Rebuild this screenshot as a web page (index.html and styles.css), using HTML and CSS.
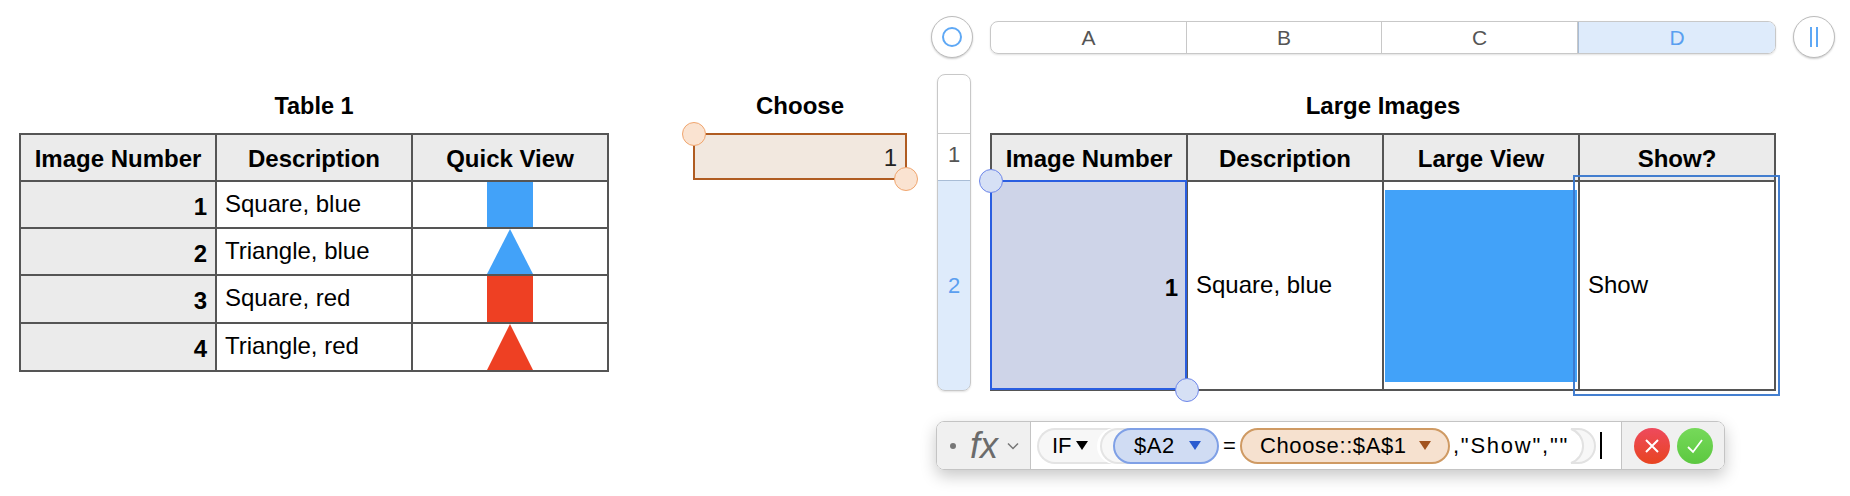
FILE: index.html
```html
<!DOCTYPE html>
<html lang="en">
<head>
    <meta charset="UTF-8">
    <title>Large Images</title>
    <link rel="stylesheet" href="styles.css">
</head>
<body>
<div class="sheet">
    <!-- Table 1 -->
    <div class="block first">
        <div class="title narrow">Table 1</div>
        <table class="grid small">
            <tr><th>Image Number</th><th>Description</th><th>Quick View</th></tr>
            <tr><td class="num">1</td><td>Square, blue</td><td class="pic"><div class="shape blue"></div></td></tr>
            <tr><td class="num">2</td><td>Triangle, blue</td><td class="pic"><div class="shape blue tri"></div></td></tr>
            <tr class="tall"><td class="num">3</td><td>Square, red</td><td class="pic"><div class="shape red"></div></td></tr>
            <tr><td class="num">4</td><td>Triangle, red</td><td class="pic"><div class="shape red tri"></div></td></tr>
        </table>
    </div>

    <!-- Choose -->
    <div class="block choose">
        <div class="title">Choose</div>
        <div class="choose-box">
            1
            <span class="handle orange top-left"></span>
            <span class="handle orange bottom-right"></span>
        </div>
    </div>

    <!-- Large Images + editing bars -->
    <div class="editor">
        <div class="ctrl-row">
            <div class="round-btn"><span class="ring"></span></div>
            <div class="col-heads">
                <span>A</span>
                <span>B</span>
                <span>C</span>
                <span class="on">D</span>
            </div>
            <div class="round-btn"><span class="bars"></span></div>
        </div>

        <div class="table-row">
            <div class="row-heads">
                <span class="blank"></span>
                <span class="one">1</span>
                <span class="two">2</span>
            </div>
            <div class="large">
                <div class="title">Large Images</div>
                <table class="grid big">
                    <tr><th>Image Number</th><th>Description</th><th>Large View</th><th>Show?</th></tr>
                    <tr>
                        <td class="num sel">
                            1
                            <span class="sel-frame"></span>
                            <span class="handle bluish top-left"></span>
                            <span class="handle bluish bottom-right"></span>
                        </td>
                        <td>Square, blue</td>
                        <td class="pic"><div class="shape blue huge"></div></td>
                        <td class="show">Show<span class="show-frame"></span></td>
                    </tr>
                </table>
            </div>
        </div>

        <div class="formula">
            <div class="fx-part">
                <span class="dot"></span>
                <span class="fx">fx</span>
                <svg class="chev" width="12" height="8" viewBox="0 0 12 8"><path d="M1 1.5l5 5 5-5" fill="none" stroke="#777" stroke-width="1.5"/></svg>
            </div>
            <div class="fx-body">
                <span class="fn">IF<i class="arrow black"></i></span>
                <span class="fn-open"></span>
                <span class="ref ref-a">$A2<i class="arrow navy"></i></span>
                <span class="eq">=</span>
                <span class="ref ref-b">Choose::$A$1<i class="arrow brown"></i></span>
                <span class="args">,"Show",""</span>
                <svg class="fn-close" width="28" height="36" viewBox="0 0 28 36"><path d="M2 1H9A17 17 0 0 1 9 35H2A18 18 0 0 0 2 1Z" fill="#f7f7f7" stroke="#e2e2e2" stroke-width="2"/></svg>
                <span class="caret"></span>
            </div>
            <div class="fx-actions">
                <span class="act cancel">
                    <svg width="16" height="16" viewBox="0 0 16 16"><path d="M2 2l12 12M14 2L2 14" stroke="#fff" stroke-width="2" fill="none"/></svg>
                </span>
                <span class="act ok">
                    <svg width="18" height="16" viewBox="0 0 18 16"><path d="M2 9l5 5L16 2" stroke="#fff" stroke-width="1.8" fill="none"/></svg>
                </span>
            </div>
        </div>
    </div>
</div>
</body>
</html>
```

FILE: styles.css
```css
* {
    margin: 0;
    padding: 0;
    box-sizing: border-box;
}

html, body {
    width: 1850px;
    height: 496px;
    overflow: hidden;
    background: #fff;
}

body {
    font-family: "Liberation Sans", Arial, sans-serif;
    font-size: 24px;
    color: #000;
}

.sheet {
    display: flex;
    align-items: flex-start;
    padding-left: 19px;
}

/* titles + tables */
.block {
    margin-top: 88px;
}

.first {
    width: 590px;
}

.title {
    height: 36px;
    margin-bottom: 9px;
    line-height: 36px;
    font-weight: bold;
    font-size: 24px;
    text-align: center;
}

.title.narrow {
    font-size: 23.5px;
}

.grid {
    border-collapse: collapse;
    table-layout: fixed;
}

.small {
    width: 590px;
}

.big {
    width: 786px;
}

.grid th,
.grid td {
    width: 196px;
    height: 47px;
    border: 2px solid #555;
    padding: 0 8px 2px;
    text-align: left;
    font-weight: normal;
}

.grid th {
    background: #ebebeb;
    padding: 3px 8px 0;
    text-align: center;
    font-weight: bold;
}

.grid .num {
    background: #ebebeb;
    padding: 4px 8px 0;
    text-align: right;
    font-weight: bold;
}

.grid .pic {
    padding: 0;
}

.grid .tall td {
    height: 48px;
}

.big td {
    height: 209px;
}

.shape {
    width: 46px;
    height: 45px;
    margin: 0 auto;
}

.blue {
    background: #42a2f9;
}

.red {
    height: 46px;
    background: #ee4023;
}

.tri {
    clip-path: polygon(50% 0, 100% 100%, 0 100%);
}

.huge {
    width: 192px;
    height: 192px;
}

/* Choose */
.choose {
    width: 214px;
    margin-left: 84px;
}

.choose-box {
    position: relative;
    display: flex;
    align-items: center;
    justify-content: flex-end;
    height: 47px;
    padding: 2px 8px 0 0;
    border: 2px solid #b05c22;
    background: #f2e8df;
    color: #222;
}

.handle {
    position: absolute;
    width: 24px;
    height: 24px;
    border-radius: 50%;
    z-index: 5;
}

.orange {
    background: #fae3d1;
    border: 1.5px solid #f0a56e;
}

.bluish {
    background: #d6e0f5;
    border: 1.5px solid #6d86ea;
}

.top-left {
    left: -13px;
    top: -13px;
}

.bottom-right {
    right: -13px;
    bottom: -13px;
}

/* right hand side */
.editor {
    width: 886px;
    margin-left: 24px;
}

.ctrl-row {
    display: flex;
    align-items: center;
    gap: 17px;
    margin-top: 16px;
}

.round-btn {
    display: flex;
    align-items: center;
    justify-content: center;
    flex: none;
    width: 42px;
    height: 42px;
    border: 1.5px solid #bcbcbc;
    border-radius: 50%;
    background: #fff;
    box-shadow: 0 1px 2px rgba(0, 0, 0, .2);
}

.ring {
    width: 20px;
    height: 20px;
    border: 2px solid #5ea8f5;
    border-radius: 50%;
}

.bars {
    width: 8px;
    height: 20px;
    border-left: 2px solid #5ea8f5;
    border-right: 2px solid #5ea8f5;
}

.col-heads {
    display: grid;
    grid-template-columns: 196px 195px 196px 1fr;
    flex: none;
    width: 786px;
    height: 33px;
    border: 1px solid #c8c8c8;
    border-radius: 8px;
    overflow: hidden;
    box-shadow: 0 1px 2px rgba(0, 0, 0, .12);
}

.col-heads span {
    border-right: 1px solid #c8c8c8;
    line-height: 32px;
    text-align: center;
    font-size: 21px;
    color: #555;
}

.col-heads .on {
    border-left: 1px solid #a9bdd6;
    border-right: 0;
    background: #deebfb;
    color: #5a9ff0;
}

.table-row {
    display: flex;
    align-items: flex-start;
    margin-top: 16px;
}

.row-heads {
    display: flex;
    flex-direction: column;
    flex: none;
    width: 34px;
    height: 317px;
    margin: 0 19px 0 6px;
    border: 1px solid #c8c8c8;
    border-radius: 8px;
    overflow: hidden;
    text-align: center;
    font-size: 22px;
    color: #555;
    box-shadow: 0 1px 2px rgba(0, 0, 0, .12);
}

.row-heads .blank {
    height: 58px;
    flex: none;
}

.row-heads .one {
    height: 47px;
    flex: none;
    border-top: 1px solid #c8c8c8;
    line-height: 42px;
}

.row-heads .two {
    flex: 1;
    display: flex;
    align-items: center;
    justify-content: center;
    margin: 0 -1px -1px;
    border: 1px solid #a9bdd6;
    border-radius: 0 0 8px 8px;
    background: #deebfb;
    color: #5a9ff0;
}

.large {
    margin-top: 14px;
}

.sel {
    position: relative;
}

.grid .sel {
    background: #ced4e8;
}

.sel-frame {
    position: absolute;
    inset: -2px -1px -1px -2px;
    border: 2px solid #2a5ee0;
}

.show {
    position: relative;
}

.show-frame {
    position: absolute;
    inset: -7px -6px -7px -7px;
    border: 2px solid rgba(58, 120, 205, .95);
}

/* formula bar */
.formula {
    display: flex;
    width: 789px;
    height: 49px;
    margin: 30px 0 0 5px;
    border: 1px solid #c4c4c4;
    border-radius: 8px;
    overflow: hidden;
    box-shadow: 0 6px 16px rgba(0, 0, 0, .22);
    font-size: 22px;
}

.fx-part {
    display: flex;
    align-items: center;
    flex: none;
    width: 94px;
    padding-left: 13px;
    border-right: 1px solid #c4c4c4;
    background: #f0f0f0;
}

.dot {
    width: 6px;
    height: 6px;
    border-radius: 50%;
    background: #777;
}

.fx {
    margin-left: 14px;
    font-size: 36px;
    font-style: italic;
    color: #6b6b6b;
    line-height: 40px;
}

.chev {
    margin-left: 9px;
}

.fx-body {
    display: flex;
    align-items: center;
    flex: 1;
    padding-left: 6px;
    background: #fff;
}

.fn {
    display: flex;
    align-items: center;
    flex: none;
    width: 78px;
    height: 36px;
    padding-left: 13px;
    border: 2px solid #e4e4e4;
    border-right: 0;
    border-radius: 18px 0 0 18px;
    background: #f7f7f7;
}

.fn-open {
    flex: none;
    width: 30px;
    height: 36px;
    margin-left: -15px;
    border: 2px solid #e4e4e4;
    border-right: 0;
    border-radius: 18px 0 0 18px;
    background: #f7f7f7;
    box-shadow: -3px 0 0 #fff;
}

.arrow {
    width: 0;
    height: 0;
    margin-left: 4px;
    border-left: 6px solid transparent;
    border-right: 6px solid transparent;
    border-top: 9px solid #000;
}

.arrow.navy {
    margin-left: 14px;
    border-top-color: #2a5bd0;
}

.arrow.brown {
    margin-left: 12px;
    border-top-color: #a2531f;
}

.ref {
    display: flex;
    align-items: center;
    flex: none;
    height: 36px;
    border-radius: 18px;
    border: 2px solid;
    padding-left: 19px;
    letter-spacing: .6px;
}

.ref-a {
    width: 106px;
    margin-left: -17px;
    position: relative;
    background: #d0dcf3;
    border-color: #7fa0e6;
}

.ref-b {
    width: 210px;
    padding-left: 18px;
    background: #f6e1cf;
    border-color: #cf9a63;
}

.eq {
    width: 21px;
    text-align: center;
}

.args {
    flex: none;
    width: 115px;
    margin-left: 3px;
    letter-spacing: 1.75px;
}

.fn-close {
    flex: none;
    margin-left: 1px;
}

.caret {
    width: 2px;
    height: 27px;
    margin-left: 3px;
    background: #000;
}

.fx-actions {
    display: flex;
    align-items: center;
    gap: 7px;
    flex: none;
    width: 103px;
    padding-left: 12px;
    border-left: 1px solid #c4c4c4;
    background: #f0f0f0;
}

.act {
    display: flex;
    align-items: center;
    justify-content: center;
    width: 36px;
    height: 36px;
    border-radius: 50%;
}

.cancel {
    background: linear-gradient(#ee4a5d, #e84420);
}

.ok {
    background: linear-gradient(#76d95a, #5cc840);
}
```
